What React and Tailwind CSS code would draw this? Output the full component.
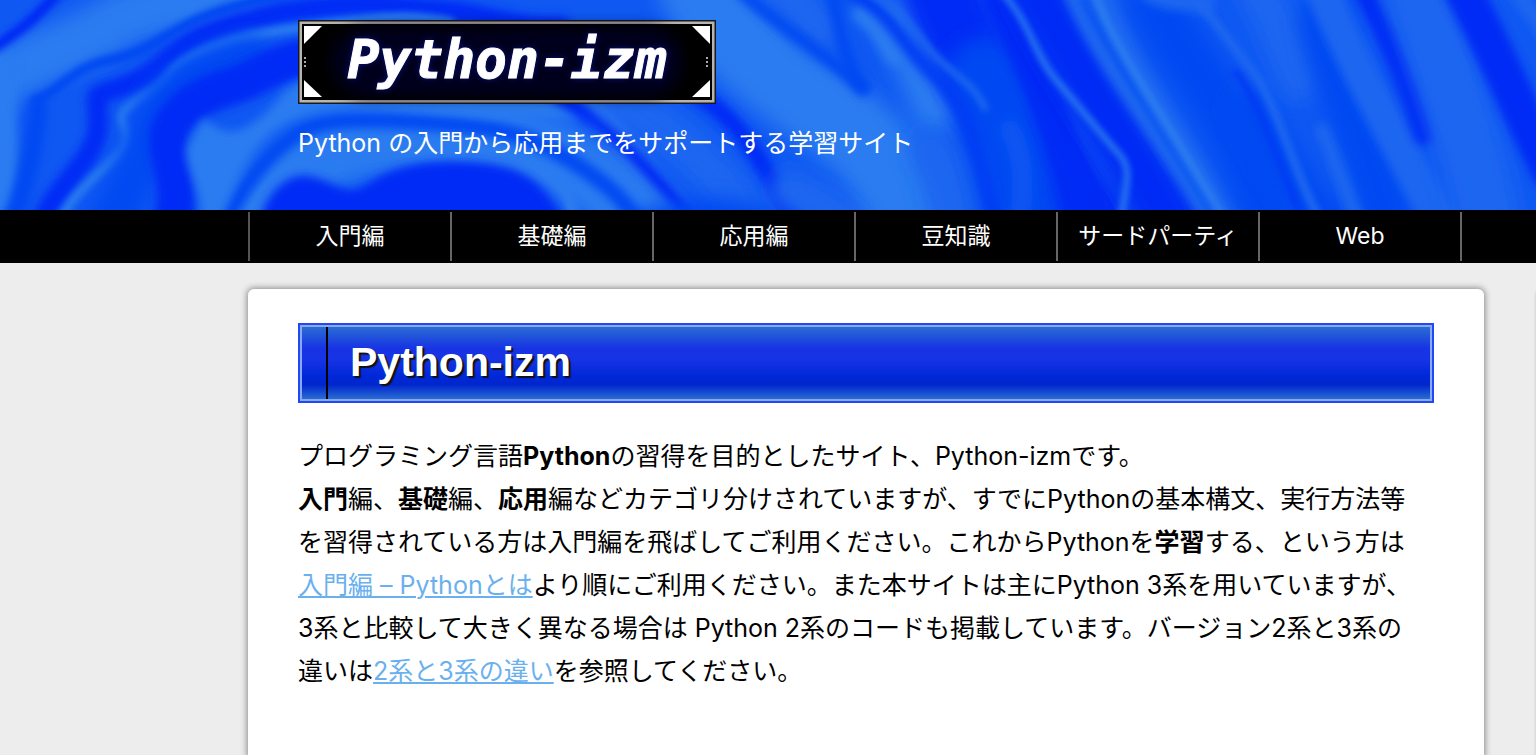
import { useState } from "react";

const LIGHT = "#2b7cf0";
const SOFT = "#1d66f0";
const MID = "#0049f2";
const DARK = "#0029f5";

// ribbons of the header pattern, painted in order
const ribbons = [
  // left side
  { d: "M-20 95 C20 60 70 50 110 25 S180 10 240 -15", color: LIGHT, width: 56 },
  { d: "M0 70 C-5 110 8 150 -5 200", color: LIGHT, width: 34 },
  { d: "M-10 50 C20 30 35 20 62 -12", color: DARK, width: 11 },
  { d: "M12 222 C28 180 36 140 38 106", color: MID, width: 18 },
  { d: "M36 100 C60 92 70 68 110 60 S160 35 200 18 S250 5 290 -10", color: MID, width: 10 },
  { d: "M42 222 C55 185 97 160 98 125 S88 98 115 89 S150 75 172 55 S220 22 300 10 S400 8 440 10 S520 30 560 26", color: DARK, width: 20 },
  { d: "M60 222 C75 185 122 160 126 142 C130 122 112 120 130 106 S160 90 170 74 S230 36 300 28 S400 12 450 22", color: LIGHT, width: 9 },
  { d: "M110 222 C130 190 145 150 155 120 S200 70 250 58", color: MID, width: 42 },
  { d: "M172 222 C185 185 162 150 170 130 S200 95 232 86 S270 60 320 56", color: DARK, width: 38 },

  // below the logo
  { d: "M250 222 C290 160 340 140 420 135 S580 150 640 222", color: LIGHT, width: 70 },
  { d: "M225 222 C250 170 280 145 300 132 S360 118 420 122 S520 128 570 160 S620 200 640 222", color: MID, width: 16 },
  { d: "M250 222 C262 190 290 168 320 158 S480 148 530 168 S565 200 575 222", color: LIGHT, width: 12 },
  { d: "M585 90 C620 140 640 170 690 222", color: LIGHT, width: 26 },
  { d: "M560 100 C600 115 645 165 695 222", color: DARK, width: 14 },
  { d: "M620 100 C670 130 720 170 750 222", color: SOFT, width: 44 },
  { d: "M650 232 C690 218 730 215 770 232", color: MID, width: 42 },

  // middle
  { d: "M700 -12 C740 60 800 90 850 130 S890 190 910 222", color: LIGHT, width: 84 },
  { d: "M900 20 C915 60 925 80 935 110", color: LIGHT, width: 46 },
  { d: "M930 150 C945 180 950 200 955 230", color: SOFT, width: 44 },
  { d: "M685 88 C735 112 755 150 795 222", color: DARK, width: 17 },
  { d: "M790 190 C800 195 830 205 850 230", color: SOFT, width: 42 },
  { d: "M770 -20 C790 -5 810 15 820 30", color: SOFT, width: 42 },
  { d: "M738 -12 C770 20 820 50 864 88", color: MID, width: 13 },
  { d: "M830 -12 C840 20 842 60 862 88", color: MID, width: 13 },
  { d: "M862 14 C880 26 885 40 895 56", color: LIGHT, width: 20 },
  { d: "M940 -12 C965 60 1010 120 1090 222", color: DARK, width: 78 },
  { d: "M985 75 C1000 110 1015 160 1024 232", color: MID, width: 74 },
  { d: "M845 -12 C895 12 900 45 935 76 S975 150 996 222", color: "#003cf4", width: 14 },
  { d: "M860 -12 C915 15 915 40 945 65 S975 90 985 108", color: SOFT, width: 7 },
  { d: "M1010 130 C1026 160 1024 190 1018 240", color: "#0f55f2", width: 20 },

  // right side
  { d: "M1000 0 C1030 60 1050 100 1090 222", color: DARK, width: 34 },
  { d: "M1035 -12 C1070 60 1120 130 1170 222", color: DARK, width: 58 },
  { d: "M998 -12 C1030 20 1034 55 1056 80 S1104 138 1119 154 S1124 190 1121 222", color: LIGHT, width: 6 },
  { d: "M1070 -12 C1100 60 1150 120 1214 222", color: SOFT, width: 18 },
  { d: "M1100 -12 C1130 60 1170 120 1232 222", color: SOFT, width: 20 },
  { d: "M1092 -12 C1115 50 1160 110 1226 222", color: LIGHT, width: 9 },
  { d: "M1082 0 C1112 60 1155 120 1216 222", color: "#1050f2", width: 3 },
  { d: "M1155 0 C1180 60 1230 90 1275 232", color: MID, width: 56 },
  { d: "M1150 -8 C1170 4 1185 -2 1205 4", color: SOFT, width: 20 },
  { d: "M1250 110 C1280 150 1290 190 1330 222", color: MID, width: 42 },
  { d: "M1198 2 C1215 20 1236 50 1256 76 S1300 190 1322 222", color: SOFT, width: 9 },
  { d: "M1236 72 C1262 105 1280 170 1304 222", color: "#0038f4", width: 6 },
  { d: "M1258 -12 C1275 20 1285 45 1300 80", color: SOFT, width: 42 },
  { d: "M1325 20 C1335 80 1370 150 1390 230", color: MID, width: 50 },
  { d: "M1322 130 C1335 160 1345 190 1358 222", color: SOFT, width: 14 },
  { d: "M1322 -12 C1350 60 1390 130 1440 222", color: SOFT, width: 34 },
  { d: "M1362 -12 C1390 40 1410 90 1424 135", color: DARK, width: 20 },
  { d: "M1416 -12 C1440 60 1470 130 1490 232", color: SOFT, width: 64 },
  { d: "M1462 -12 C1495 50 1515 100 1550 170", color: DARK, width: 38 },
  { d: "M1515 -12 C1525 5 1540 20 1550 40", color: SOFT, width: 18 },
];

const menus = [
  { label: "入門編", href: "#basic" },
  { label: "基礎編", href: "#fundamental" },
  { label: "応用編", href: "#advanced" },
  { label: "豆知識", href: "#tips" },
  { label: "サードパーティ", href: "#third-party" },
  { label: "Web", href: "#web" },
];

const HeaderPattern = () => (
  <svg
    className="absolute inset-0 h-full w-full"
    viewBox="0 0 1536 210"
    preserveAspectRatio="none"
    aria-hidden="true"
  >
    <defs>
      <filter id="fine" filterUnits="userSpaceOnUse" x="-40" y="-40" width="1616" height="290">
        <feGaussianBlur stdDeviation="3" />
      </filter>
      <filter id="soft" filterUnits="userSpaceOnUse" x="-40" y="-40" width="1616" height="290">
        <feGaussianBlur stdDeviation="5" />
      </filter>
      <filter id="wide" filterUnits="userSpaceOnUse" x="-40" y="-40" width="1616" height="290">
        <feGaussianBlur stdDeviation="10" />
      </filter>
    </defs>
    <rect width="1536" height="210" fill="#0f58f2" />
    <g fill="none" strokeLinecap="round">
      {ribbons.map((ribbon) => (
        <path
          key={ribbon.d}
          d={ribbon.d}
          stroke={ribbon.color}
          strokeWidth={ribbon.width}
          filter={
            ribbon.width > 40
              ? "url(#wide)"
              : ribbon.width > 12
              ? "url(#soft)"
              : "url(#fine)"
          }
        />
      ))}
    </g>
    <g filter="url(#soft)">
      <path
        d="M200 222 C204 190 180 160 188 145 L204 118 C225 138 240 134 262 116 S280 86 310 80 L540 95 L580 122 C540 114 500 118 440 112 S340 104 300 118 S240 166 220 222 Z"
        fill={LIGHT}
      />
      <path
        d="M260 222 C266 190 290 172 310 176 S345 195 360 188 S390 164 440 162 S515 168 530 178 S555 205 565 222 Z"
        fill={DARK}
      />
    </g>
  </svg>
);

const LogoFrame = () => (
  <svg
    className="absolute inset-0 h-full w-full"
    viewBox="0 0 418 84"
    aria-hidden="true"
  >
    <rect width="418" height="84" fill="#1a1a1a" />
    <rect x="1.5" y="1.5" width="415" height="81" fill="#b8b4b0" />
    <rect x="4" y="4" width="410" height="76" fill="#000" />
    <g fill="#fff">
      <path d="M6 6 H24 L6 24 Z" />
      <path d="M412 6 H394 L412 24 Z" />
      <path d="M6 77 H24 L6 60 Z" />
      <path d="M412 77 H394 L412 60 Z" />
    </g>
    <g stroke="#aaa" strokeWidth="2" strokeDasharray="2 2">
      <path d="M7 37 V49" />
      <path d="M409 37 V49" />
    </g>
  </svg>
);

export default function App() {
  const [current, setCurrent] = useState(null);

  return (
    <div className="flex min-h-screen flex-col overflow-hidden bg-[#ededed] font-[Inter,'Noto_Sans_CJK_JP',sans-serif] text-[25px] text-black">
      {/* HEADER */}
      <header className="relative h-[210px] pt-5 pl-[298px] text-white">
        <HeaderPattern />
        <a
          href="#top"
          className="relative flex h-[84px] w-[418px] items-center justify-center"
        >
          <LogoFrame />
          <span className="relative rounded-full bg-[#00001c] px-2 pb-1 font-['DejaVu_Sans_Mono',monospace] text-[53px] leading-[50px] font-bold italic shadow-[0_0_14px_8px_#00001c] [-webkit-text-stroke:1px_#fff] [text-shadow:0_0_6px_#0c1690]">
            Python-izm
          </span>
        </a>
        <p className="relative mt-5 leading-[38px]">
          Python の入門から応用までをサポートする学習サイト
        </p>
      </header>

      {/* NAV */}
      <nav className="bg-black py-[2px] pl-[248px]">
        <ul className="flex border-l-2 border-[#555] text-[23px] text-white">
          {menus.map((menu) => (
            <li key={menu.label} className="w-[202px] border-r-2 border-[#666]">
              <a
                href={menu.href}
                onClick={() => setCurrent(menu.label)}
                aria-current={current === menu.label ? "page" : undefined}
                className="block text-center leading-[49px] hover:bg-[#222]"
              >
                {menu.label}
              </a>
            </li>
          ))}
        </ul>
      </nav>

      {/* CONTENT */}
      <div className="flex flex-1 pt-[26px] pl-[248px]">
        <main className="min-w-0 flex-1 rounded-t-md bg-white px-[50px] pt-[34px] pb-16 shadow-[0_0_6px_1px_#888]">
          <h1 className="flex h-[80px] border-2 border-[#2248f5] bg-[#1733e4] font-['Liberation_Sans',Arial,sans-serif] text-[41px] font-bold text-white">
            <span className="flex flex-1 items-center border-2 border-[#8aaaf0] bg-[linear-gradient(#2a6cd4,#1733e4_30%,#1733e4_45%,#0028d8_68%,#0026cc_80%,#2a6cd4)]">
              <span className="h-full w-[26px] border-r-2 border-black" />
              <span className="pl-[22px] [text-shadow:2px_2px_1px_#111]">
                Python-izm
              </span>
            </span>
          </h1>

          <p className="mt-8 pr-3 leading-[43px]">
            プログラミング言語<strong>Python</strong>
            の習得を目的としたサイト、Python-izmです。
            <br />
            <strong>入門</strong>編、<strong>基礎</strong>編、
            <strong>応用</strong>
            編などカテゴリ分けされていますが、すでにPythonの基本構文、実行方法等を習得されている方は入門編を飛ばしてご利用ください。これからPythonを
            <strong>学習</strong>する、という方は
            <a
              href="#basic"
              className="text-[#6bb0ee] underline decoration-2 underline-offset-2"
            >
              入門編 – Pythonとは
            </a>
            より順にご利用ください。また本サイトは主にPython
            3系を用いていますが、3系と比較して大きく異なる場合は Python
            2系のコードも掲載しています。バージョン2系と3系の違いは
            <a
              href="#difference"
              className="text-[#6bb0ee] underline decoration-2 underline-offset-2"
            >
              2系と3系の違い
            </a>
            を参照してください。
          </p>
        </main>
        <aside className="-mr-[400px] ml-[52px] w-[400px] shrink-0 rounded-t-md bg-white shadow-[0_0_3px_#bbb]" />
      </div>
    </div>
  );
}
